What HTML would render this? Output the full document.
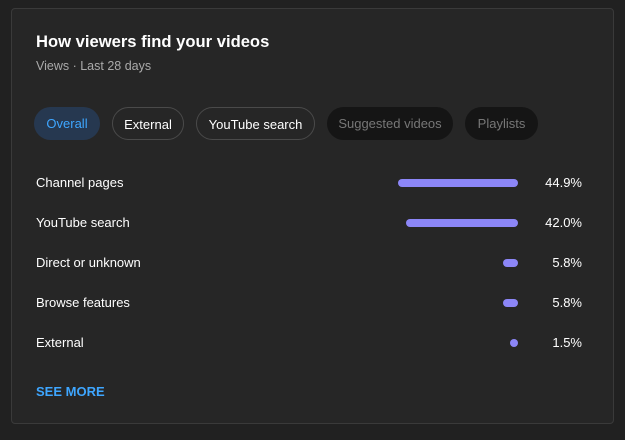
<!DOCTYPE html><html><head><style>
body{margin:0;width:625px;height:440px;background:#212121;font-family:"Liberation Sans",sans-serif;position:relative;overflow:hidden}
.card{position:absolute;left:11px;top:8px;width:601px;height:414px;border:1px solid #3a3a3a;border-radius:4px;background:#262626}
.a{position:absolute;white-space:nowrap}
h1{position:absolute;left:36px;top:32px;margin:0;font-size:16.6px;font-weight:bold;color:#fff}
.sub{left:36px;top:59px;font-size:12.5px;color:#aaa}
.chip{position:absolute;top:107px;height:33px;border-radius:17px;box-sizing:border-box;font-size:13px;line-height:33px;text-align:center}
.o{border:1px solid #4a4a4a;color:#fff}
.d{background:#151515;color:#777}
.lab{left:36px;font-size:13px;color:#fff}
.pct{right:43px;font-size:13px;color:#fff;text-align:right}
.bar{position:absolute;height:8px;border-radius:4px;background:#8c86f7}
</style></head><body>
<div class="card"></div>
<h1>How viewers find your videos</h1>
<div class="a sub">Views · Last 28 days</div>
<div class="chip" style="left:34px;width:66px;background:#263850;color:#3ea6ff">Overall</div>
<div class="chip o" style="left:112px;width:72px">External</div>
<div class="chip o" style="left:196px;width:119px">YouTube search</div>
<div class="chip d" style="left:327px;width:126px">Suggested videos</div>
<div class="chip d" style="left:465px;width:73px">Playlists</div>
<div class="a lab" style="top:175px">Channel pages</div><div class="bar" style="left:398px;width:120px;top:179px"></div><div class="a pct" style="top:175px">44.9%</div>
<div class="a lab" style="top:215px">YouTube search</div><div class="bar" style="left:406px;width:112px;top:219px"></div><div class="a pct" style="top:215px">42.0%</div>
<div class="a lab" style="top:255px">Direct or unknown</div><div class="bar" style="left:503px;width:15px;top:259px"></div><div class="a pct" style="top:255px">5.8%</div>
<div class="a lab" style="top:295px">Browse features</div><div class="bar" style="left:503px;width:15px;top:299px"></div><div class="a pct" style="top:295px">5.8%</div>
<div class="a lab" style="top:335px">External</div><div class="bar" style="left:510px;width:8px;top:339px"></div><div class="a pct" style="top:335px">1.5%</div>
<div class="a" style="left:36px;top:384px;font-size:13px;font-weight:bold;color:#3ea6ff">SEE MORE</div>
</body></html>
